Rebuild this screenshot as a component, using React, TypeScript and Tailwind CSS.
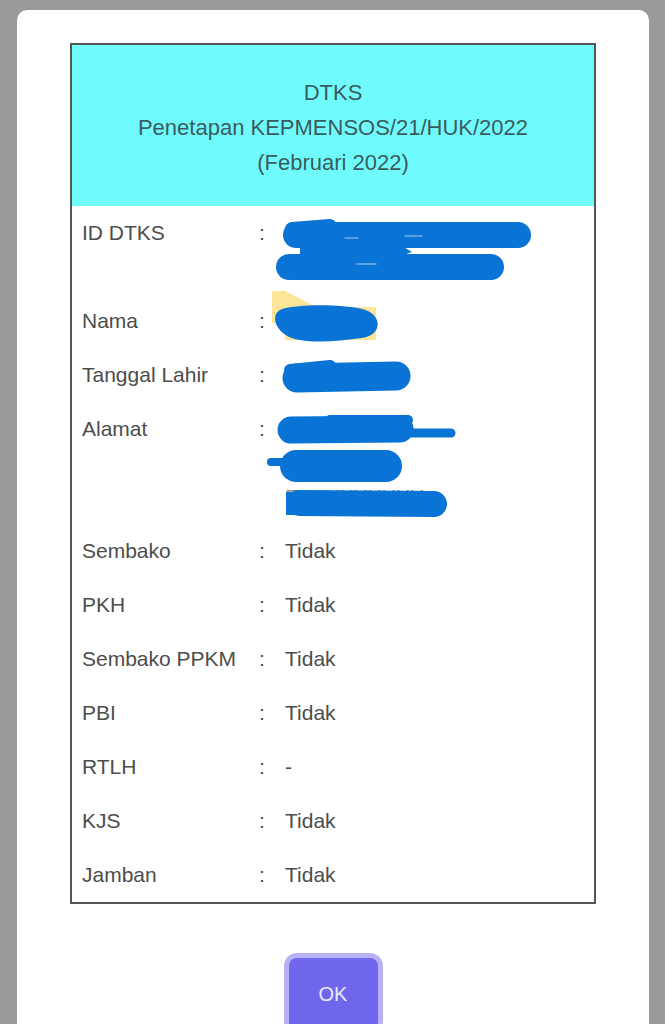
import React from 'react'

type Row = { label: string; lines: string[]; muted?: boolean }

const rows: Row[] = [
  { label: 'ID DTKS', lines: ['XXXXXXXXXXXXXXXX', 'XXXXXXXXXXXXXX'], muted: true },
  { label: 'Nama', lines: ['XXXXXX'], muted: true },
  { label: 'Tanggal Lahir', lines: ['XXXXXXXX'], muted: true },
  { label: 'Alamat', lines: ['XXXXXXXXX', 'KXXXXXX', 'FXXXXXXXXX'], muted: true },
  { label: 'Sembako', lines: ['Tidak'] },
  { label: 'PKH', lines: ['Tidak'] },
  { label: 'Sembako PPKM', lines: ['Tidak'] },
  { label: 'PBI', lines: ['Tidak'] },
  { label: 'RTLH', lines: ['-'] },
  { label: 'KJS', lines: ['Tidak'] },
  { label: 'Jamban', lines: ['Tidak'] },
]

// coret biru di atas data pribadi (koordinat halaman)
const Redactions = () => {
  const blue = '#0a74d6'
  return (
    <svg className="pointer-events-none absolute left-0 top-0 h-full w-full overflow-visible">
      <g transform="translate(-72 -45)">
        {/* ID DTKS */}
        <g stroke={blue} strokeLinecap="round" fill="none">
          <line x1="296" y1="235" x2="518" y2="235" strokeWidth="26" />
          <line x1="289" y1="267" x2="491" y2="267" strokeWidth="26" />
          <line x1="292" y1="229" x2="330" y2="226" strokeWidth="14" />
        </g>
        <polygon points="300,232 392,240 412,252 392,259 300,270" fill={blue} />
        <g stroke="#b9d8f4" strokeWidth="1.5" strokeLinecap="round" opacity="0.6">
          <line x1="345" y1="238" x2="358" y2="238" />
          <line x1="405" y1="236" x2="422" y2="236" />
          <line x1="357" y1="264" x2="376" y2="264" />
        </g>

        {/* Nama */}
        <polygon points="272,291 285,291 316,307 376,307 376,340 285,340 285,323 272,323" fill="#fde598" />
        <path
          d="M282 309 C300 304 340 304 362 309 C382 313 384 335 362 338 C340 341 318 343 300 340 C276 337 268 314 282 309 Z"
          fill={blue}
        />

        {/* Tanggal Lahir */}
        <g stroke={blue} strokeLinecap="round" fill="none">
          <line x1="297" y1="378" x2="396" y2="376" strokeWidth="29" />
          <line x1="290" y1="370" x2="330" y2="366" strokeWidth="12" />
        </g>

        {/* Alamat */}
        <g stroke={blue} strokeLinecap="round" fill="none">
          <line x1="291" y1="430" x2="400" y2="429" strokeWidth="27" />
          <line x1="330" y1="420" x2="408" y2="420" strokeWidth="10" />
          <line x1="400" y1="433" x2="451" y2="433" strokeWidth="9" />
          <line x1="296" y1="466" x2="386" y2="466" strokeWidth="32" />
          <line x1="271" y1="462" x2="300" y2="462" strokeWidth="8" />
          <line x1="299" y1="503" x2="434" y2="504" strokeWidth="26" />
        </g>
        <rect x="286" y="492" width="20" height="23" fill={blue} />
      </g>
    </svg>
  )
}

export default function App() {
  return (
    <div
      className="min-h-screen overflow-hidden bg-[#9a9a9a]"
      style={{ fontFamily: '"Liberation Sans", Arial, sans-serif' }}
    >
      <div className="ml-[17px] mt-[10px] w-[632px] rounded-t-[10px] bg-white px-[53px] pb-[40px] pt-[33px]">
        <div className="relative border-2 border-[#555555]">
          <div className="bg-[#6ffbfc] pb-[26px] pt-[30px] text-center text-[22px] leading-[35px] text-[#3b5b5d]">
            <div>DTKS</div>
            <div>Penetapan KEPMENSOS/21/HUK/2022</div>
            <div>(Februari 2022)</div>
          </div>
          <div className="text-[21px] leading-[34px] text-[#4d4d4d]">
            {rows.map((r) => (
              <div key={r.label} className="grid grid-cols-[187px_26px_1fr] py-[10px]">
                <div className="pl-[10px]">{r.label}</div>
                <div>:</div>
                <div className={r.muted ? 'text-[#8a8a8a]' : ''}>
                  {r.lines.map((l, i) => (
                    <div key={i}>{l}</div>
                  ))}
                </div>
              </div>
            ))}
          </div>
          <Redactions />
        </div>
        <div className="mt-[54px] flex justify-center">
          <button className="h-[72px] w-[89px] rounded-[8px] bg-[#6f66eb] text-[20px] text-[#eceaff] ring-[5px] ring-[#b7b2f6]">
            OK
          </button>
        </div>
      </div>
    </div>
  )
}
